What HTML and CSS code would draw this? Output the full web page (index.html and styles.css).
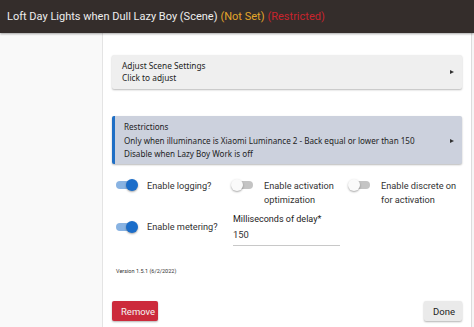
FILE: index.html
```html
<!DOCTYPE html>
<html>
<head>
<meta charset="utf-8">
<link rel="stylesheet" href="styles.css">
</head>
<body>
<header class="topbar">
  <span class="title">Loft Day Lights when Dull Lazy Boy (Scene)</span>
  <span class="notset">(Not Set)</span>
  <span class="restricted">(Restricted)</span>
</header>
<div class="layout">
  <aside class="sidebar"></aside>
  <main class="main">
    <div class="card card-scene">
      <div class="card-text">
        <div>Adjust Scene Settings</div>
        <div>Click to adjust</div>
      </div>
      <span class="arrow"></span>
    </div>
    <div class="card card-restrict">
      <div class="card-text">
        <div>Restrictions</div>
        <div>Only when illuminance is Xiaomi Luminance 2 - Back equal or lower than 150</div>
        <div>Disable when Lazy Boy Work is off</div>
      </div>
      <span class="arrow"></span>
    </div>
    <div class="options">
      <div class="opt">
        <span class="switch on"><span class="knob"></span></span>
        <span class="opt-label">Enable logging?</span>
      </div>
      <div class="opt">
        <span class="switch"><span class="knob"></span></span>
        <span class="opt-label">Enable activation<br>optimization</span>
      </div>
      <div class="opt">
        <span class="switch"><span class="knob"></span></span>
        <span class="opt-label">Enable discrete on<br>for activation</span>
      </div>
      <div class="opt opt-row2">
        <span class="switch on"><span class="knob"></span></span>
        <span class="opt-label">Enable metering?</span>
      </div>
      <div class="field">
        <div class="field-label">Milliseconds of delay*</div>
        <div class="field-value">150</div>
      </div>
    </div>
    <div class="version">Version 1.5.1 (6/2/2022)</div>
    <div class="buttons">
      <button class="btn btn-remove">Remove</button>
      <button class="btn btn-done">Done</button>
    </div>
  </main>
  <div class="edge"></div>
</div>
</body>
</html>
```

FILE: styles.css
```css
html, body {
  margin: 0;
  padding: 0;
}
body {
  width: 474px;
  height: 327px;
  overflow: hidden;
  background: #ffffff;
  font-family: Roboto, "Liberation Sans", sans-serif;
}
.topbar {
  height: 33px;
  box-sizing: border-box;
  background: #342d2b;
  color: #eeeeee;
  font-size: 11px;
  padding: 0 0 0 7px;
  display: flex;
  align-items: center;
  gap: 3px;
  box-shadow: 0 1px 2px rgba(0,0,0,0.35);
  position: relative;
  z-index: 2;
}
.notset { color: #e3a52a; }
.restricted { color: #c8242d; }
.layout {
  display: flex;
  height: 294px;
}
.sidebar {
  width: 102px;
  background: #f9f9f9;
  border-right: 1px solid #e4e4e4;
}
.main {
  flex: 1;
  background: #ffffff;
  border-right: 1px solid #dcdcdc;
  padding: 22px 9px 0 9px;
  display: flex;
  flex-direction: column;
}
.edge {
  width: 2px;
  background: #f6f6f6;
}
.card {
  display: flex;
  align-items: center;
  justify-content: space-between;
  font-family: "Noto Sans", "DejaVu Sans", sans-serif;
  font-size: 8.1px;
  line-height: 12.5px;
  color: #1e1e1e;
  box-shadow: 0 1px 2px rgba(0,0,0,0.28);
  border-radius: 2px;
}
.card-scene {
  background: #efefef;
  height: 34px;
  padding: 0 8px 0 10px;
  font-size: 8.3px;
}
.card-restrict {
  margin-top: 27px;
  background: #ccd1dd;
  height: 47px;
  border-left: 3px solid #1f6fc5;
  padding: 1px 8px 0 9px;
}
.card-restrict .card-text {
  line-height: 13.5px;
}
.arrow {
  width: 0;
  height: 0;
  border-left: 4px solid #333;
  border-top: 2.5px solid transparent;
  border-bottom: 2.5px solid transparent;
}
.options {
  display: grid;
  grid-template-columns: 117px 117px 1fr;
  grid-template-rows: 36px 40px;
  margin-top: 11px;
  padding-left: 4px;
  color: #333;
  font-size: 9.2px;
  line-height: 14px;
}
.opt {
  display: flex;
  align-items: flex-start;
  gap: 11px;
  padding-top: 4px;
}
.opt-row2 {
  padding-top: 9px;
}
.switch {
  position: relative;
  width: 20px;
  height: 8px;
  border-radius: 4px;
  background: #c4c4c4;
  margin-top: 2px;
  flex: none;
}
.switch.on {
  background: #89b3e2;
}
.knob {
  position: absolute;
  top: -2px;
  left: -2px;
  width: 12px;
  height: 12px;
  border-radius: 50%;
  background: #fafafa;
  box-shadow: 0 1px 2px rgba(0,0,0,0.35);
}
.switch.on .knob {
  left: 10px;
  background: #1b6dc9;
}
.opt-row2 .switch { margin-top: 3px; }
.field {
  padding-top: 2px;
  width: 107px;
}
.field-label {
  font-size: 9px;
  color: #222;
  line-height: 13px;
}
.field-value {
  font-size: 9.4px;
  color: #333;
  line-height: 14px;
  padding-top: 2px;
  border-bottom: 1px solid #c8c8c8;
  padding-bottom: 3px;
}
.version {
  margin-top: 17px;
  padding-left: 4px;
  font-size: 5.5px;
  color: #333;
}
.buttons {
  display: flex;
  justify-content: space-between;
  margin-top: 27px;
}
.btn {
  font-family: Roboto, "Liberation Sans", sans-serif;
  font-size: 9.5px;
  border: none;
  border-radius: 2px;
  height: 20px;
  padding: 0 9px;
  box-shadow: 0 1px 2px rgba(0,0,0,0.3);
}
.btn-remove {
  background: #cc2a3b;
  color: #f4f4f4;
  width: 46px;
}
.btn-done {
  background: #eaeaea;
  color: #222;
  width: 38px;
}
```
